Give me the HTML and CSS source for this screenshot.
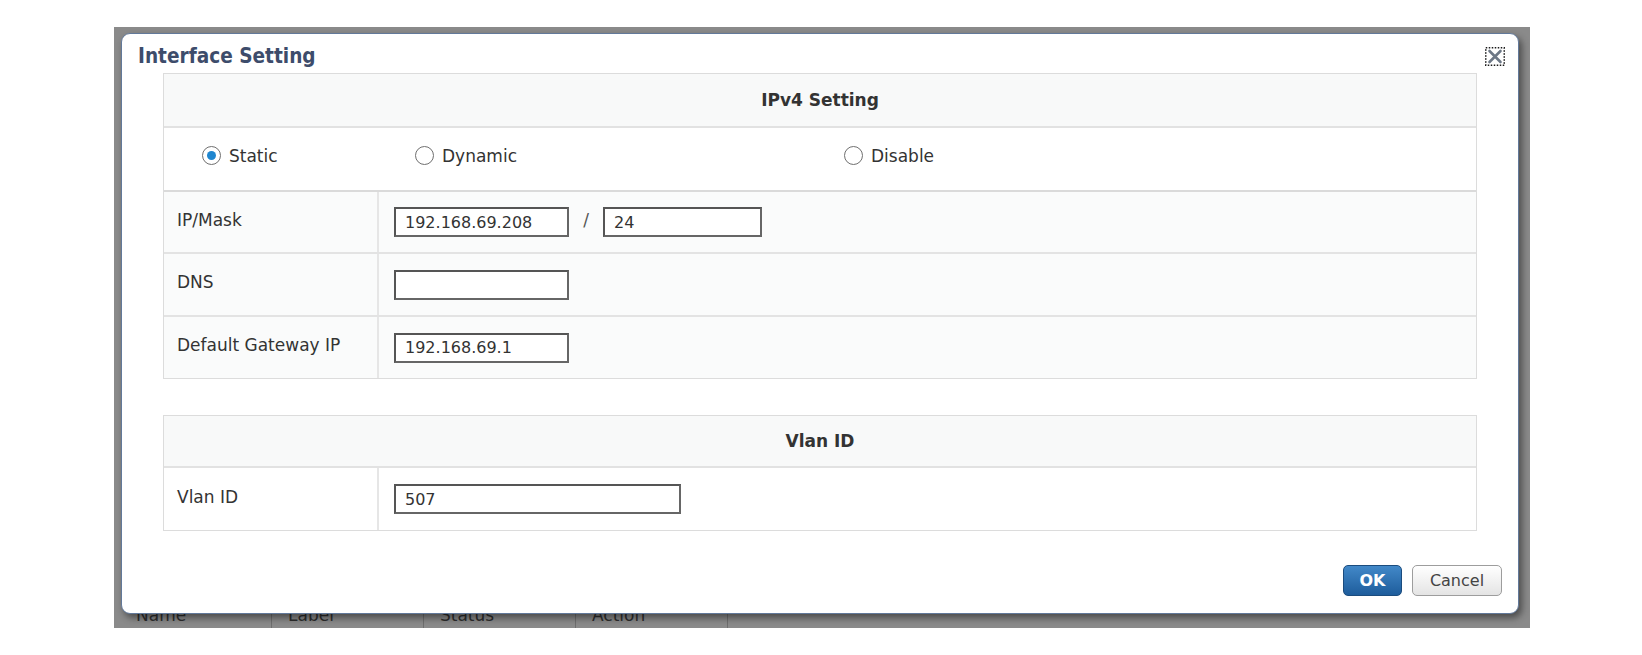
FILE: index.html
```html
<!DOCTYPE html>
<html>
<head>
<meta charset="utf-8">
<title>Interface Setting</title>
<link rel="stylesheet" href="styles.css">
</head>
<body>
<div class="overlay">
  <div class="under">
    <div class="ucell first">Name</div>
    <div class="ucell">Label</div>
    <div class="ucell">Status</div>
    <div class="ucell">Action</div>
  </div>
  <div class="dialog">
    <div class="titlebar">
      <div class="title">Interface Setting</div>
      <svg class="close" viewBox="0 0 20 19" width="20" height="19">
        <rect x="0.75" y="0.75" width="18.5" height="17.5" fill="none" stroke="#1a1a1a" stroke-width="1.5" stroke-dasharray="1.5 1.5"/>
        <path d="M4.5 4 L15.5 15 M15.5 4 L4.5 15" stroke="#6d7886" stroke-width="2.6" stroke-linecap="round"/>
      </svg>
    </div>
    <div class="content">
      <div class="tbl">
        <div class="thead">IPv4 Setting</div>
        <div class="radios">
          <div class="rcell c1"><span class="radio checked"></span>Static</div>
          <div class="rcell c2"><span class="radio"></span>Dynamic</div>
          <div class="rcell c3"><span class="radio"></span>Disable</div>
        </div>
        <div class="row tinted r-ip">
          <div class="lbl">IP/Mask</div>
          <div class="val">
            <input class="inp w-ip" type="text" value="192.168.69.208" readonly>
            <span class="slash">/</span>
            <input class="inp w-mask" type="text" value="24" readonly>
          </div>
        </div>
        <div class="row tinted r-dns">
          <div class="lbl">DNS</div>
          <div class="val"><input class="inp w-ip" type="text" value="" readonly></div>
        </div>
        <div class="row tinted r-gw last">
          <div class="lbl">Default Gateway IP</div>
          <div class="val"><input class="inp w-ip" type="text" value="192.168.69.1" readonly></div>
        </div>
      </div>
      <div class="tbl vlan">
        <div class="thead vhead">Vlan ID</div>
        <div class="row r-vlan last">
          <div class="lbl">Vlan ID</div>
          <div class="val"><input class="inp w-vlan" type="text" value="507" readonly></div>
        </div>
      </div>
    </div>
    <div class="footer">
      <button class="btn ok" type="button">OK</button>
      <button class="btn cancel" type="button">Cancel</button>
    </div>
  </div>
</div>
</body>
</html>
```
FILE: styles.css
```css
* { box-sizing: border-box; }
html, body { margin: 0; padding: 0; background: #ffffff; }
body {
  width: 1642px;
  height: 655px;
  overflow: hidden;
  font-family: "DejaVu Sans", "Liberation Sans", sans-serif;
  color: #333333;
}
.overlay {
  position: relative;
  margin: 27px 0 0 114px;
  width: 1416px;
  height: 601px;
  background: #8a8a8a;
  padding: 6px 11px 14px 7px;
  overflow: hidden;
}
.under {
  position: absolute;
  left: 0;
  top: 568px;
  height: 40px;
  display: flex;
  font-size: 17px;
  line-height: 40px;
  color: #2e2e2e;
}
.ucell {
  width: 152px;
  padding-left: 16px;
  border-right: 1px solid #6e6e6e;
}
.ucell.first { width: 158px; padding-left: 22px; }
.dialog {
  position: relative;
  z-index: 1;
  width: 1398px;
  height: 581px;
  background: #ffffff;
  border: 1px solid #62799a;
  border-radius: 9px;
  box-shadow: 3px 4px 7px rgba(0, 0, 0, 0.45);
  display: flex;
  flex-direction: column;
}
.titlebar {
  display: flex;
  justify-content: space-between;
  align-items: flex-start;
  height: 39px;
  padding: 6px 13px 0 16px;
}
.title {
  font-family: "DejaVu Sans Condensed", "DejaVu Sans", sans-serif;
  font-weight: bold;
  font-size: 20.6px;
  line-height: 32px;
  color: #3d4c6b;
}
.close { margin-top: 7px; display: block; }
.content { padding: 0 41px; }
.tbl { border: 1px solid #dcdcdc; }
.thead {
  height: 54px;
  border-bottom: 2px solid #e2e2e2;
  background: #f8f9f9;
  display: flex;
  align-items: center;
  justify-content: center;
  font-weight: bold;
  font-size: 17px;
  color: #333333;
}
.radios {
  height: 64px;
  border-bottom: 2px solid #dadada;
  display: flex;
  align-items: center;
  padding-bottom: 7px;
  font-size: 17px;
  background: #ffffff;
}
.rcell { display: flex; align-items: center; }
.c1 { width: 215px; padding-left: 38px; }
.c2 { width: 429px; padding-left: 36px; }
.c3 { padding-left: 36px; }
.radio {
  width: 19px;
  height: 19px;
  border: 1.5px solid #6f6f6f;
  border-radius: 50%;
  background: #ffffff;
  margin-right: 8px;
  display: flex;
  align-items: center;
  justify-content: center;
}
.radio.checked::after {
  content: "";
  width: 9px;
  height: 9px;
  border-radius: 50%;
  background: #1f86cf;
}
.row {
  display: flex;
  border-bottom: 2px solid #e3e3e3;
  background: #ffffff;
  font-size: 17px;
}
.row.tinted { background: #fafbfb; }
.row.last { border-bottom: none; }
.r-ip { height: 62px; }
.r-dns { height: 63px; }
.r-gw { height: 61px; }
.r-vlan { height: 62px; }
.lbl {
  width: 215px;
  border-right: 2px solid #e6e6e6;
  padding: 0 0 5px 13px;
  display: flex;
  align-items: center;
}
.val {
  flex: 1;
  display: flex;
  align-items: center;
  padding-left: 15px;
}
.inp {
  height: 30px;
  border: 2px solid #666666;
  border-top-color: #555555;
  border-left-color: #555555;
  background: #ffffff;
  font-family: "DejaVu Sans", "Liberation Sans", sans-serif;
  font-size: 16px;
  color: #333333;
  padding: 0 0 0 9px;
  margin: 0;
  outline: none;
  border-radius: 0;
}
.w-ip { width: 175px; }
.w-mask { width: 159px; }
.w-vlan { width: 287px; }
.slash {
  width: 34px;
  text-align: center;
  font-size: 17px;
  color: #555555;
  padding-bottom: 4px;
}
.vlan { margin-top: 36px; }
.vhead { height: 52px; }
.footer {
  display: flex;
  justify-content: flex-end;
  gap: 10px;
  margin-top: 34px;
  padding-right: 16px;
}
.btn {
  height: 31px;
  border-radius: 5px;
  font-family: "DejaVu Sans", "Liberation Sans", sans-serif;
  font-size: 16px;
  padding: 0;
  margin: 0;
  cursor: pointer;
}
.ok {
  width: 59px;
  background: linear-gradient(#4288c8, #1e5d9c);
  border: 1px solid #1b4c7e;
  color: #ffffff;
  font-weight: bold;
}
.cancel {
  width: 90px;
  background: linear-gradient(#ffffff, #e4e4e4);
  border: 1px solid #9d9d9d;
  color: #444444;
}
```
